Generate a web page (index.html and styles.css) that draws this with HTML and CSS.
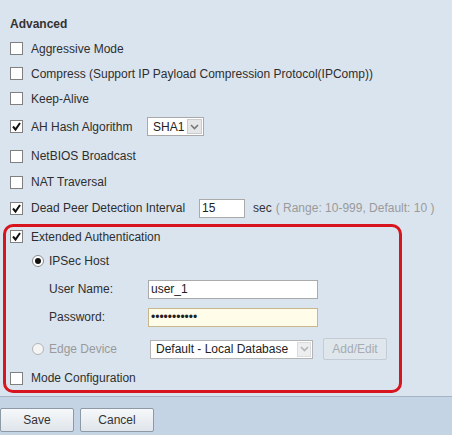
FILE: index.html
```html
<!DOCTYPE html>
<html>
<head>
<meta charset="utf-8">
<link rel="stylesheet" href="styles.css">
</head>
<body>
<div class="page">
  <div class="main">
    <div class="heading">Advanced</div>
    <div class="row h25"><span class="cb"></span><span>Aggressive Mode</span></div>
    <div class="row h25"><span class="cb"></span><span>Compress (Support IP Payload Compression Protocol(IPComp))</span></div>
    <div class="row h25"><span class="cb"></span><span>Keep-Alive</span></div>
    <div class="row h31"><span class="cb on"><svg viewBox="0 0 11 11" width="11" height="11"><polyline points="2,5.5 4.5,8.5 9,2" fill="none" stroke="#111" stroke-width="2"/></svg></span><span class="lbl-ah">AH Hash Algorithm</span>
      <div class="sel sel-ah"><span class="sel-txt">SHA1</span><span class="sel-arr"><svg viewBox="0 0 9 6" width="9" height="6"><polyline points="1,1 4.5,4.5 8,1" fill="none" stroke="#777" stroke-width="1.6"/></svg></span></div>
    </div>
    <div class="row h28"><span class="cb"></span><span>NetBIOS Broadcast</span></div>
    <div class="row h24"><span class="cb"></span><span>NAT Traversal</span></div>
    <div class="row h28"><span class="cb on"><svg viewBox="0 0 11 11" width="11" height="11"><polyline points="2,5.5 4.5,8.5 9,2" fill="none" stroke="#111" stroke-width="2"/></svg></span><span class="lbl-dpd">Dead Peer Detection Interval</span>
      <input class="txt txt-dpd" type="text" value="15"><span class="sec">sec</span><span class="hint">( Range: 10-999, Default: 10 )</span>
    </div>

    <div class="xauth">
      <div class="row h19"><span class="cb on"><svg viewBox="0 0 11 11" width="11" height="11"><polyline points="2,5.5 4.5,8.5 9,2" fill="none" stroke="#111" stroke-width="2"/></svg></span><span>Extended Authentication</span></div>
      <div class="row h30 rad-row"><span class="radio on"></span><span>IPSec Host</span></div>
      <div class="row h26 field-row"><span class="flabel">User Name:</span><input class="txt txt-wide" type="text" value="user_1"></div>
      <div class="row h30 field-row"><span class="flabel">Password:</span><input class="txt txt-wide pwd" type="password" value="12345678901"></div>
      <div class="row h34 rad-row"><span class="radio off"></span><span class="edge">Edge Device</span>
        <div class="sel sel-edge"><span class="sel-txt">Default - Local Database</span><span class="sel-arr dis"><svg viewBox="0 0 9 6" width="9" height="6"><polyline points="1,1 4.5,4.5 8,1" fill="none" stroke="#b5b5b5" stroke-width="1.6"/></svg></span></div>
        <span class="btn-dis">Add/Edit</span>
      </div>
      <div class="row h24"><span class="cb"></span><span>Mode Configuration</span></div>
    </div>
  </div>
  <div class="footer">
    <span class="btn btn-save">Save</span>
    <span class="btn btn-cancel">Cancel</span>
  </div>
</div>
</body>
</html>
```
FILE: styles.css
```css
html, body {
  margin: 0;
  padding: 0;
}
body {
  font-family: "Liberation Sans", Arial, sans-serif;
  font-size: 12px;
  color: #2e2e2e;
  background: #c4d4e5;
  width: 452px;
  height: 435px;
  overflow: hidden;
}
.page {
  display: flex;
  flex-direction: column;
  height: 435px;
}
.main {
  background: #dae4ee;
  height: 396px;
  padding-top: 14px;
  box-sizing: border-box;
}
.heading {
  height: 22px;
  line-height: 20px;
  font-weight: bold;
  padding-left: 10px;
  color: #333;
}
.row {
  display: flex;
  align-items: center;
  white-space: nowrap;
}
.h19 { height: 19px; }
.h24 { height: 24px; }
.h25 { height: 25px; }
.h26 { height: 26px; }
.h28 { height: 28px; }
.h30 { height: 30px; }
.h31 { height: 31px; }
.h34 { height: 34px; }

.cb {
  width: 13px;
  height: 13px;
  box-sizing: border-box;
  border: 1px solid #808080;
  background: #fff;
  margin-left: 10px;
  margin-right: 8px;
  flex: none;
  display: flex;
  align-items: center;
  justify-content: center;
}
.cb svg { display: block; }

.lbl-ah { width: 116px; }
.lbl-dpd { width: 168px; }

.sel {
  display: flex;
  align-items: stretch;
  height: 19px;
  box-sizing: border-box;
  border: 1px solid #a9a9a9;
  background: #fff;
  flex: none;
}
.sel-txt {
  display: flex;
  align-items: center;
  padding-left: 5px;
  flex: 1;
  color: #222;
}
.sel-arr {
  width: 14px;
  margin: 1px;
  background: #e4e6e8;
  border: 1px solid #c9cbcd;
  box-sizing: border-box;
  display: flex;
  align-items: center;
  justify-content: center;
}
.sel-arr.dis { background: #eceeef; border-color: #dadcde; }
.sel-ah { width: 57px; }
.sel-ah .sel-arr { width: 15px; }

.txt {
  font-family: "Liberation Sans", Arial, sans-serif;
  font-size: 12px;
  color: #222;
  box-sizing: border-box;
  border: 1px solid #aaa;
  background: #fff;
  margin: 0;
  padding: 0 2px;
  outline: none;
}
.txt-dpd {
  width: 46px;
  height: 19px;
  margin-right: 8px;
}
.sec { color: #333; margin-right: 4px; }
.hint { color: #9a9a9a; }

.xauth {
  margin-left: 3px;
  margin-top: 2px;
  width: 399px;
  height: 169px;
  box-sizing: border-box;
  border: 3px solid #d8141e;
  border-radius: 10px;
  padding-left: 4px;
  padding-top: 0;
}
.xauth .cb { margin-left: 0; }
.rad-row { padding-left: 22px; }
.radio {
  width: 12px;
  height: 12px;
  box-sizing: border-box;
  border-radius: 50%;
  border: 1px solid #8a8a8a;
  background: #fff;
  margin-right: 5px;
  flex: none;
  display: flex;
  align-items: center;
  justify-content: center;
}
.radio.on::after {
  content: "";
  width: 6px;
  height: 6px;
  border-radius: 50%;
  background: #111;
}
.radio.off {
  border-color: #b4b4b4;
  background: #f4f4f4;
}
.edge { color: #9a9a9a; width: 101px; }

.field-row { padding-left: 39px; }
.flabel { width: 99px; }
.txt-wide {
  width: 170px;
  height: 19px;
}
.pwd {
  background: #fffcea;
  border-color: #c8b78a;
  letter-spacing: 0;
}
.sel-edge { width: 163px; height: 19px; border-color: #b4b4b4; }
.btn-dis {
  margin-left: 10px;
  width: 64px;
  height: 22px;
  box-sizing: border-box;
  border: 1px solid #c3ccd4;
  border-radius: 2px;
  background: #dfe6ec;
  color: #a5acb3;
  display: flex;
  align-items: center;
  justify-content: center;
}

.footer {
  flex: 1;
  border-top: 1px solid #a4b4c4;
  background: #c4d4e5;
  display: flex;
  align-items: flex-start;
  padding-top: 11px;
  gap: 6px;
}
.btn {
  height: 24px;
  box-sizing: border-box;
  border: 1px solid #8d99a5;
  border-radius: 2px;
  background: linear-gradient(#f6f8fa, #dfe5eb);
  color: #333;
  display: flex;
  align-items: center;
  justify-content: center;
  font-size: 12px;
}
.btn-save { width: 74px; }
.btn-cancel { width: 74px; }
```
